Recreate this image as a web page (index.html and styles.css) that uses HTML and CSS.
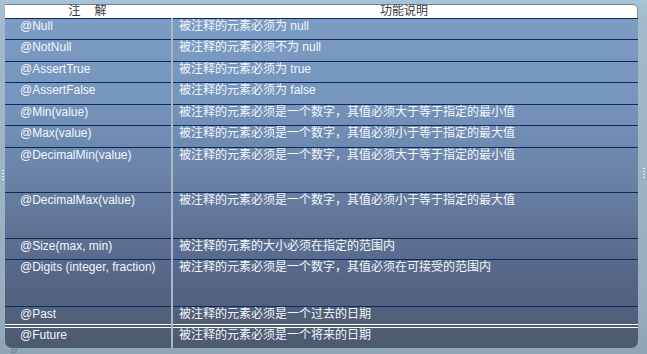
FILE: index.html
```html
<!DOCTYPE html>
<html lang="zh">
<head>
<meta charset="utf-8">
<title>注解</title>
<link rel="stylesheet" href="styles.css">
</head>
<body>
<div class="window">
  <div class="grip grip-left"></div>
  <div class="grip grip-right"></div>
  <div class="table">
    <div class="thead">
      <div class="c1">注　解</div>
      <div class="c2">功能说明</div>
    </div>
    <div class="tbody">
      <div class="row h21"><div class="c1">@Null</div><div class="c2">被注释的元素必须为 null</div></div>
      <div class="row h22"><div class="c1">@NotNull</div><div class="c2">被注释的元素必须不为 null</div></div>
      <div class="row h21"><div class="c1">@AssertTrue</div><div class="c2">被注释的元素必须为 true</div></div>
      <div class="row h22"><div class="c1">@AssertFalse</div><div class="c2">被注释的元素必须为 false</div></div>
      <div class="row h21"><div class="c1">@Min(value)</div><div class="c2">被注释的元素必须是一个数字，其值必须大于等于指定的最小值</div></div>
      <div class="row h22"><div class="c1">@Max(value)</div><div class="c2">被注释的元素必须是一个数字，其值必须小于等于指定的最大值</div></div>
      <div class="row h45"><div class="c1">@DecimalMin(value)</div><div class="c2">被注释的元素必须是一个数字，其值必须大于等于指定的最小值</div></div>
      <div class="row h46"><div class="c1">@DecimalMax(value)</div><div class="c2">被注释的元素必须是一个数字，其值必须小于等于指定的最大值</div></div>
      <div class="row h21"><div class="c1">@Size(max, min)</div><div class="c2">被注释的元素的大小必须在指定的范围内</div></div>
      <div class="row h47"><div class="c1">@Digits (integer, fraction)</div><div class="c2">被注释的元素必须是一个数字，其值必须在可接受的范围内</div></div>
      <div class="row h19 row-past"><div class="c1">@Past</div><div class="c2">被注释的元素必须是一个过去的日期</div></div>
      <div class="row h20 row-future"><div class="c1">@Future</div><div class="c2">被注释的元素必须是一个将来的日期</div></div>
    </div>
  </div>
  <div class="footer">17</div>
</div>
</body>
</html>
```
FILE: styles.css
```css
html, body {
  margin: 0;
  padding: 0;
}
body {
  width: 647px;
  height: 354px;
  overflow: hidden;
  background: #9fb6c7;
  font-family: "Liberation Sans", "Noto Sans CJK SC", sans-serif;
  font-size: 12px;
}
.window {
  position: relative;
  height: 354px;
  padding: 4px 9px 0 5px;
  box-sizing: border-box;
  background: linear-gradient(180deg, #a9c3d7 0px, #a2bacb 20px, #98aebf 300px, #8fa4b4 354px);
}
.grip {
  position: absolute;
  width: 2px;
  height: 12px;
  top: 170px;
  background: repeating-linear-gradient(180deg, #e8eef3 0 1px, transparent 1px 3px);
}
.grip-left { left: 2px; }
.grip-right { right: 2px; top: 168px; }
.table {
  display: flex;
  flex-direction: column;
  width: 633px;
}
.thead {
  display: flex;
  height: 14px;
  box-sizing: border-box;
  background: #ffffff;
  border-top: 1px solid #6e8194;
  border-right: 1px solid #7b8e9f;
  border-top-right-radius: 5px;
  color: #333a44;
  line-height: 13px;
}
.thead .c1 {
  width: 166px;
  text-align: center;
  letter-spacing: 1px;
}
.thead .c2 {
  flex: 1;
  text-align: center;
}
.tbody {
  position: relative;
  display: flex;
  flex-direction: column;
  height: 330px;
  background: linear-gradient(180deg, #7c9cc4 0%, #7595bd 25%, #687fa2 52%, #58688a 75%, #4c596f 100%);
  border-bottom-left-radius: 7px;
  border-bottom-right-radius: 7px;
  color: #f3f6fb;
  line-height: 14px;
  overflow: hidden;
}
.tbody::before {
  content: "";
  position: absolute;
  left: 166px;
  top: 0;
  bottom: 0;
  width: 2px;
  background: #aab7c9;
}
.row {
  display: flex;
  box-sizing: border-box;
  border-top: 1px solid #0b2b5e;
  flex: none;
}
.row .c1 {
  width: 166px;
  padding-left: 15px;
  box-sizing: border-box;
  white-space: nowrap;
}
.row .c2 {
  flex: 1;
  padding-left: 8px;
  white-space: nowrap;
}
.h19 { height: 19px; }
.h20 { height: 20px; }
.h21 { height: 21px; }
.h22 { height: 22px; }
.h45 { height: 45px; }
.h46 { height: 46px; }
.h47 { height: 47px; }
.row-past {
  border-bottom: 1px solid #ffffff;
}
.row-future {
  margin-top: 2px;
  border-top: 1px solid #ffffff;
}
.footer {
  height: 6px;
  padding-left: 6px;
  color: #556577;
  font-size: 6px;
  line-height: 6px;
}
```
